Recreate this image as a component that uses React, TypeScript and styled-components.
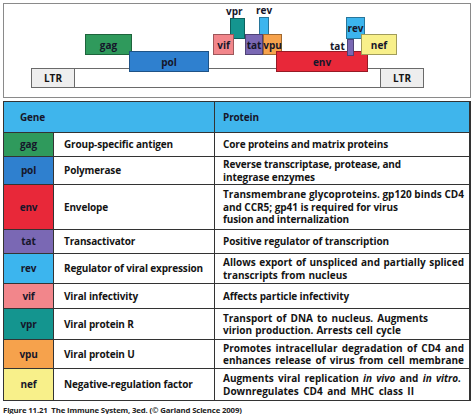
import React, { useLayoutEffect, useRef, useState } from 'react';
import styled, { createGlobalStyle } from 'styled-components';

const GlobalStyle = createGlobalStyle`
  body {
    margin: 0;
    background: #ffffff;
    font-family: "Open Sans", Lato, sans-serif;
    color: #141414;
  }
`;

const Page = styled.div`
  width: 474px;
  height: 414px;
  padding: 3px 3px 0 3px;
  box-sizing: border-box;
  display: flex;
  flex-direction: column;
  gap: 3px;
  overflow: hidden;
`;

const Diagram = styled.div`
  position: relative;
  width: 468px;
  height: 95px;
  box-sizing: border-box;
  border: 1px solid #8a8a8a;
  background: #fff;
  flex-shrink: 0;
`;

const Genome = styled.div`
  position: absolute;
  left: 27px;
  top: 64px;
  width: 393px;
  height: 20px;
  box-sizing: border-box;
  border: 1px solid #6a6a6a;
  display: flex;
  justify-content: space-between;
  background: #fff;
`;

const LTR = styled.div<{ $side: 'left' | 'right' }>`
  width: 42px;
  background: #eeeeee;
  border-left: ${(p) => (p.$side === 'right' ? '1px solid #6a6a6a' : 'none')};
  border-right: ${(p) => (p.$side === 'left' ? '1px solid #6a6a6a' : 'none')};
  display: flex;
  align-items: center;
  justify-content: center;
  font-size: 10px;
  font-weight: 700;
`;

const GeneBox = styled.div<{ $c: string }>`
  position: absolute;
  box-sizing: border-box;
  background: ${(p) => p.$c};
  border: 1px solid rgba(0, 0, 0, 0.35);
  display: flex;
  align-items: center;
  justify-content: center;
  font-size: 10px;
  font-weight: 700;
  color: #16162a;
`;

const GeneLabel = styled.div`
  position: absolute;
  font-size: 10px;
  font-weight: 700;
  color: #16162a;
`;

type G = { name: string; c: string; x: number; y: number; w: number; h: number; text?: boolean; z: number };

const genes: G[] = [
  { name: 'gag', c: '#2f9a5c', x: 81, y: 30, w: 47, h: 21, text: true, z: 1 },
  { name: 'pol', c: '#2f80cf', x: 125, y: 47, w: 80, h: 21, text: true, z: 2 },
  { name: 'vpr', c: '#14958f', x: 226, y: 14, w: 15, h: 21, z: 1 },
  { name: 'rev', c: '#3cb5ee', x: 255, y: 13, w: 10, h: 22, z: 1 },
  { name: 'vif', c: '#f2868b', x: 209, y: 30, w: 21, h: 21, text: true, z: 2 },
  { name: 'tat', c: '#7a68b4', x: 241, y: 30, w: 18, h: 21, text: true, z: 2 },
  { name: 'vpu', c: '#f6a24c', x: 259, y: 30, w: 19, h: 21, text: true, z: 2 },
  { name: 'env', c: '#e82839', x: 272, y: 47, w: 92, h: 21, text: true, z: 3 },
  { name: 'tat', c: '#7a68b4', x: 343, y: 35, w: 7, h: 17, z: 4 },
  { name: 'rev', c: '#3cb5ee', x: 342, y: 13, w: 19, h: 22, text: true, z: 4 },
  { name: 'nef', c: '#f8f08a', x: 357, y: 30, w: 36, h: 21, text: true, z: 4 },
];

const Table = styled.div`
  display: grid;
  grid-template-columns: 50px 161px minmax(0, 1fr);
  width: 468px;
  box-sizing: border-box;
  border: 1.5px solid #333;
  border-right-width: 2px;
`;

const Cell = styled.div<{ $bg?: string; $h: number; $center?: boolean; $last?: boolean; $pad?: number }>`
  height: ${(p) => p.$h}px;
  box-sizing: border-box;
  min-width: 0;
  overflow: hidden;
  background: ${(p) => p.$bg || '#fff'};
  border-bottom: ${(p) => (p.$last ? 'none' : '1.5px solid #333')};
  display: flex;
  flex-direction: column;
  justify-content: center;
  align-items: ${(p) => (p.$center ? 'center' : 'flex-start')};
  padding: 0 ${(p) => p.$pad ?? 8}px;
  font-size: 10px;
  font-weight: 700;
  line-height: 12.5px;
  letter-spacing: -0.15px;
`;

const ColorCell = styled(Cell)`
  border-right: 1.5px solid #333;
  color: #16162a;
`;

const NameCell = styled(Cell)`
  border-right: 1.5px solid #333;
`;

const HeaderCell = styled(Cell)`
  background: #3fb5ec;
  color: #16162a;
`;

const HeaderGene = styled(HeaderCell)`
  grid-column: span 2;
  border-right: 1.5px solid #333;
  padding-left: 16px;
`;

const LineText = styled.span`
  display: block;
  width: max-content;
  white-space: nowrap;
  letter-spacing: 0;
  word-spacing: 0;
`;

const Caption = styled.div`
  font-size: 7.8px;
  font-weight: 700;
  color: #222;
  padding-top: 1px;
  letter-spacing: -0.15px;
`;

type Mode = 'ls' | 'ws';
type L = { t: React.ReactNode; w: number; mode?: Mode };

function FitLine({ t, w, mode = 'ls' }: L) {
  const ref = useRef<HTMLSpanElement>(null);
  const [sp, setSp] = useState<number | null>(null);
  useLayoutEffect(() => {
    const el = ref.current;
    if (!el) return;
    const natural = el.getBoundingClientRect().width;
    const txt = el.textContent || '';
    const n = mode === 'ws' ? (txt.match(/ /g) || []).length : txt.length;
    if (n === 0) return;
    const raw = (w - natural) / n;
    setSp(mode === 'ws' ? Math.max(raw, 0.5) : Math.max(raw, -0.2));
  }, [w, mode]);
  const style =
    sp === null ? undefined : mode === 'ws' ? { wordSpacing: `${sp}px` } : { letterSpacing: `${sp}px` };
  return (
    <LineText ref={ref} style={style}>
      {t}
    </LineText>
  );
}

type Row = {
  gene: string;
  c: string;
  name: string;
  h: number;
  lines: L[];
};

const rows: Row[] = [
  { gene: 'gag', c: '#2f9a5c', name: 'Group-specific antigen', h: 24, lines: [{ t: 'Core proteins and matrix proteins', w: 165 }] },
  {
    gene: 'pol', c: '#2f80cf', name: 'Polymerase', h: 28,
    lines: [
      { t: 'Reverse transcriptase, protease, and', w: 178 },
      { t: 'integrase enzymes', w: 92 },
    ],
  },
  {
    gene: 'env', c: '#e82839', name: 'Envelope', h: 45,
    lines: [
      { t: 'Transmembrane glycoproteins. gp120 binds CD4', w: 241 },
      { t: 'and CCR5; gp41 is required for virus', w: 175 },
      { t: 'fusion and internalization', w: 126 },
    ],
  },
  { gene: 'tat', c: '#7a68b4', name: 'Transactivator', h: 24, lines: [{ t: 'Positive regulator of transcription', w: 166 }] },
  {
    gene: 'rev', c: '#3cb5ee', name: 'Regulator of viral expression', h: 30,
    lines: [
      { t: 'Allows export of unspliced and partially spliced', w: 241, mode: 'ws' },
      { t: 'transcripts from nucleus', w: 96, mode: 'ws' },
    ],
  },
  { gene: 'vif', c: '#f2868b', name: 'Viral infectivity', h: 25, lines: [{ t: 'Affects particle infectivity', w: 126 }] },
  {
    gene: 'vpr', c: '#14958f', name: 'Viral protein R', h: 31,
    lines: [
      { t: 'Transport of DNA to nucleus. Augments', w: 205, mode: 'ws' },
      { t: 'virion production. Arrests cell cycle', w: 156, mode: 'ws' },
    ],
  },
  {
    gene: 'vpu', c: '#f6a24c', name: 'Viral protein U', h: 29,
    lines: [
      { t: 'Promotes intracellular degradation of CD4 and', w: 241, mode: 'ws' },
      { t: 'enhances release of virus from cell membrane', w: 241, mode: 'ws' },
    ],
  },
  {
    gene: 'nef', c: '#f8f08a', name: 'Negative-regulation factor', h: 31,
    lines: [
      { t: <>Augments viral replication <i>in vivo</i> and <i>in vitro.</i></>, w: 238, mode: 'ws' },
      { t: 'Downregulates CD4 and MHC class II', w: 191, mode: 'ws' },
    ],
  },
];

export default function App() {
  return (
    <>
      <GlobalStyle />
      <Page>
        <Diagram>
          <Genome>
            <LTR $side="left">LTR</LTR>
            <LTR $side="right">LTR</LTR>
          </Genome>
          {genes.map((g, i) => (
            <GeneBox key={i} $c={g.c} style={{ left: g.x, top: g.y, width: g.w, height: g.h, zIndex: g.z }}>
              {g.text ? g.name : null}
            </GeneBox>
          ))}
          <GeneLabel style={{ left: 222, top: 0 }}>vpr</GeneLabel>
          <GeneLabel style={{ left: 252, top: -1 }}>rev</GeneLabel>
          <GeneLabel style={{ left: 326, top: 35 }}>tat</GeneLabel>
        </Diagram>
        <Table>
          <HeaderGene $h={31}>Gene</HeaderGene>
          <HeaderCell $h={31}>Protein</HeaderCell>
          {rows.map((r, i) => {
            const last = i === rows.length - 1;
            return (
              <React.Fragment key={r.gene}>
                <ColorCell $bg={r.c} $h={r.h} $center $last={last}>
                  {r.gene}
                </ColorCell>
                <NameCell $h={r.h} $last={last} $pad={10}>
                  {r.name}
                </NameCell>
                <Cell $h={r.h} $last={last}>
                  {r.lines.map((l, j) => (
                    <FitLine key={j} {...l} />
                  ))}
                </Cell>
              </React.Fragment>
            );
          })}
        </Table>
        <Caption>Figure 11.21&nbsp; The Immune System, 3ed. (© Garland Science 2009)</Caption>
      </Page>
    </>
  );
}
